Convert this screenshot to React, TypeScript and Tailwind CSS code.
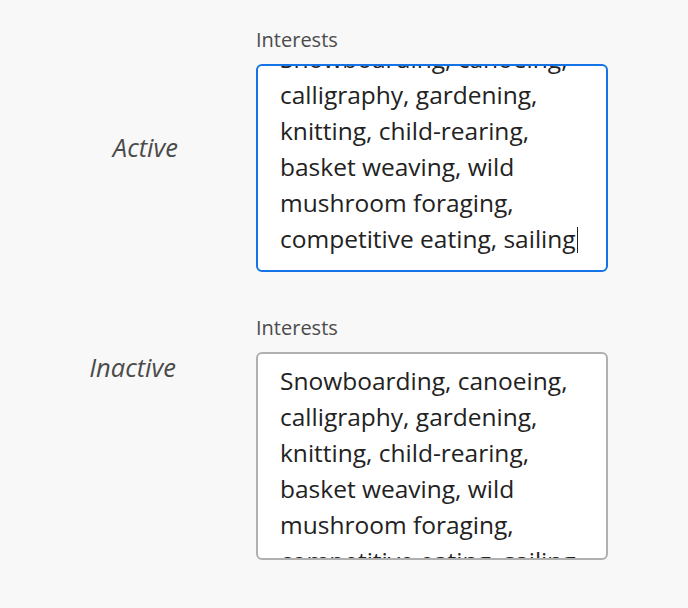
import React from 'react';

const INTERESTS = [
  'Snowboarding, canoeing,',
  'calligraphy, gardening,',
  'knitting, child-rearing,',
  'basket weaving, wild',
  'mushroom foraging,',
  'competitive eating, sailing',
];

const font = { fontFamily: '"Open Sans", "Noto Sans", sans-serif' };

function Field({ active }: { active: boolean }) {
  return (
    <div className="w-[352px]">
      <div className="h-[24px] text-[20px] leading-[24px] text-[#4b4b4b]">Interests</div>
      <div
        className={
          active
            ? 'mt-[12px] h-[208px] overflow-hidden rounded-[6px] border-2 border-[#1473e6] bg-white'
            : 'mt-[12px] h-[208px] overflow-hidden rounded-[6px] border-2 border-[#b0b0b0] bg-white'
        }
      >
        <div
          className={
            active
              ? 'mt-[-25px] pl-[22px] text-[24.5px] leading-[36px] text-[#222222]'
              : 'mt-[9px] pl-[22px] text-[24.5px] leading-[36px] text-[#222222]'
          }
        >
          {INTERESTS.map((line, i) => (
            <div key={i} className="whitespace-nowrap">
              {line}
              {active && i === INTERESTS.length - 1 && (
                <span className="ml-[1px] inline-block h-[26px] w-[1.5px] translate-y-[5px] bg-[#222222]" />
              )}
            </div>
          ))}
        </div>
      </div>
    </div>
  );
}

export default function App() {
  return (
    <div className="min-h-[608px] w-[688px] bg-[#f8f8f8] pt-[28px]" style={font}>
      <div className="flex">
        <div className="w-[180px] pr-[2px] pt-[101px] text-right text-[25.5px] italic leading-[36px] text-[#4b4b4b]">
          Active
        </div>
        <div className="ml-[76px]">
          <Field active />
        </div>
      </div>
      <div className="mt-[44px] flex">
        <div className="w-[180px] pr-[4px] pt-[33px] text-right text-[25.5px] italic leading-[36px] text-[#4b4b4b]">
          Inactive
        </div>
        <div className="ml-[76px]">
          <Field active={false} />
        </div>
      </div>
    </div>
  );
}
